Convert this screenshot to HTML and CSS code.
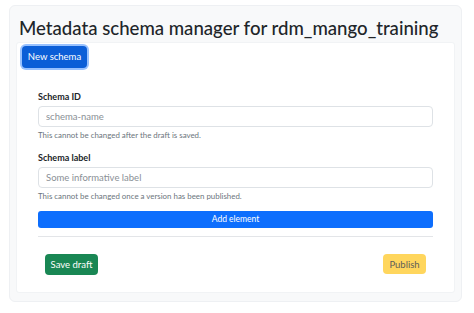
FILE: index.html
```html
<!DOCTYPE html>
<html lang="en">
<head>
    <meta charset="UTF-8">
    <meta name="viewport" content="width=device-width, initial-scale=1.0">
    <title>Metadata schema manager</title>
    <link rel="stylesheet" href="styles.css">
</head>
<body>

<div class="manager">
    <!-- header -->
    <h1 class="manager-title">Metadata schema manager for rdm_mango_training</h1>

    <div class="editor">
        <button class="btn btn-new" type="button">New schema</button>

        <!-- schema form -->
        <form class="schema-form">
            <label class="field-label" for="schemaId">Schema ID</label>
            <input class="field-input" id="schemaId" type="text" placeholder="schema-name">
            <div class="field-help">This cannot be changed after the draft is saved.</div>

            <label class="field-label second" for="schemaLabel">Schema label</label>
            <input class="field-input" id="schemaLabel" type="text" placeholder="Some informative label">
            <div class="field-help">This cannot be changed once a version has been published.</div>

            <button class="btn btn-add" type="button">Add element</button>
            <hr class="divider">

            <div class="form-actions">
                <button class="btn btn-save" type="button">Save draft</button>
                <button class="btn btn-publish" type="button" disabled>Publish</button>
            </div>
        </form>
    </div>
</div>

</body>
</html>
```

FILE: styles.css
```css
/* base */
* {
    margin: 0;
    padding: 0;
    box-sizing: border-box;
}
body {
    font-family: Lato, "Noto Sans", sans-serif;
    background-color: #fff;
    color: #212529;
}
/* outer light panel */
.manager {
    margin: 5px 12px 10px 9px;
    background-color: #f8f9fa;
    border: 1px solid #eef0f3;
    border-radius: 6px;
    padding: 0 6px 8px 6px;
}
.manager-title {
    font-size: 18.6px;
    font-weight: 500;
    line-height: 26px;
    padding: 9px 0 0 3px;
    height: 36px;
    white-space: nowrap;
}
/* white card */
.editor {
    background-color: #fff;
    border: 1px solid #f1f3f5;
    border-radius: 3px;
    padding: 1px 0 17px 5px;
}
.btn {
    font-family: inherit;
    border: none;
    border-radius: 4px;
    color: #fff;
    cursor: pointer;
}
.btn-new {
    width: 65px;
    height: 22px;
    font-size: 9.5px;
    background-color: #0b5ed7;
    box-shadow: 0 0 0 2px rgba(49, 132, 253, 0.5);
}
.schema-form {
    padding: 22px 21px 0 16px;
}
.field-label {
    display: block;
    font-size: 9px;
    font-weight: 700;
    line-height: 14px;
    margin-bottom: 2px;
}
.field-label.second {
    margin-top: 10px;
}
.field-input {
    display: block;
    width: 100%;
    height: 21px;
    border: 1px solid #dee2e6;
    border-radius: 4px;
    padding: 0 7px;
    font-family: inherit;
    font-size: 9.5px;
    color: #212529;
}
.field-input::placeholder {
    color: #8a9096;
}
.field-help {
    font-size: 7.9px;
    line-height: 12px;
    margin-top: 2px;
    color: #6c757d;
}
.btn-add {
    display: block;
    width: 100%;
    height: 17px;
    margin-top: 9px;
    background-color: #0d6efd;
    font-size: 8.5px;
    border-radius: 3px;
}
.divider {
    border: none;
    border-top: 1px solid #e3e5e8;
    margin: 8px 0 17px 0;
}
.form-actions {
    display: flex;
    justify-content: space-between;
    align-items: center;
    padding: 0 7px;
}
.btn-save {
    width: 53px;
    height: 21px;
    font-size: 9.5px;
    background-color: #198754;
}
.btn-publish {
    width: 43px;
    height: 20px;
    font-size: 9.5px;
    background-color: #ffc107;
    color: #000;
    opacity: 0.65;
    cursor: default;
}
```
